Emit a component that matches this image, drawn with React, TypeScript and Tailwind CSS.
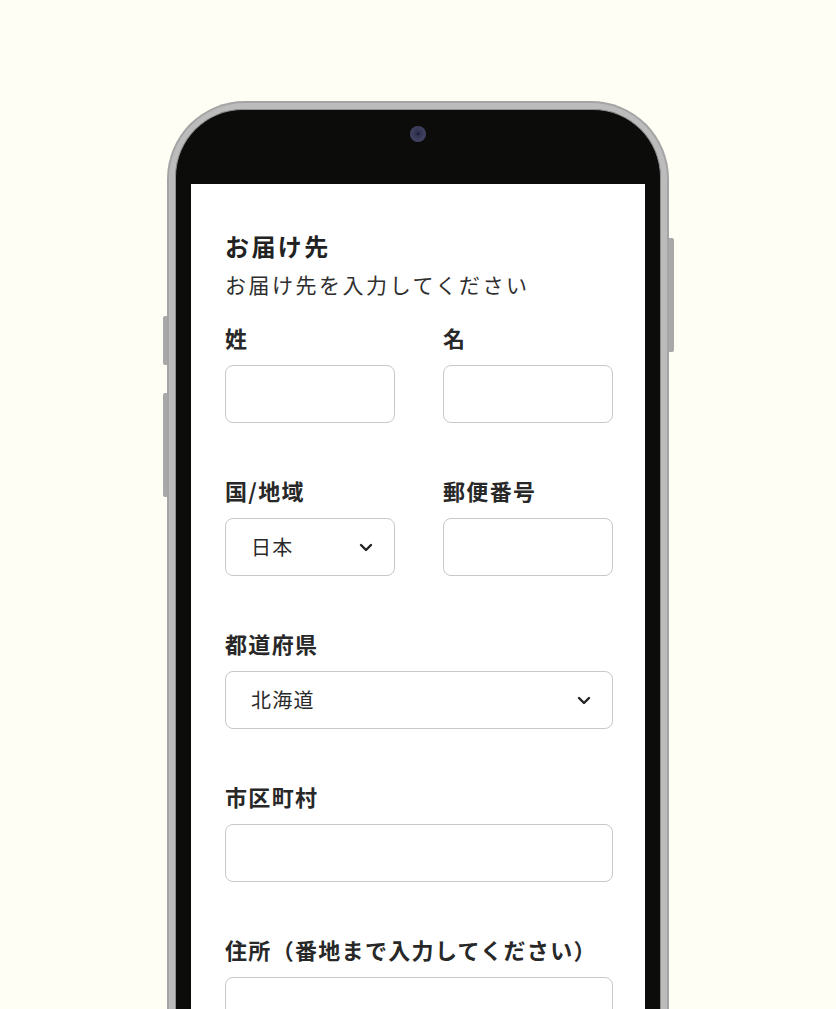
import React from "react";

const font = { fontFamily: '"Noto Sans CJK JP", "Noto Sans", sans-serif' };

function Chevron() {
  return (
    <svg width="14" height="9" viewBox="0 0 14 9" fill="none" className="shrink-0">
      <path d="M2 2l5 5 5-5" stroke="#222" strokeWidth="2.4" strokeLinecap="round" strokeLinejoin="round" />
    </svg>
  );
}

function Label({ children }: { children: React.ReactNode }) {
  return (
    <div className="h-[28px] mb-[14px] flex items-center text-[22px] font-bold text-[#282828] tracking-[0.06em] leading-none whitespace-nowrap">
      {children}
    </div>
  );
}

function Input() {
  return <div className="h-[58px] rounded-[8px] border border-[#c8c8c8] bg-white" />;
}

function Select({ value }: { value: string }) {
  return (
    <div className="h-[58px] rounded-[8px] border border-[#c8c8c8] bg-white flex items-center justify-between pl-[25px] pr-[21px]">
      <span className="text-[20px] text-[#2a2a2a] tracking-[0.06em] leading-none">{value}</span>
      <Chevron />
    </div>
  );
}

export default function App() {
  return (
    <div className="w-[836px] h-[1009px] overflow-hidden bg-[#fefef5]" style={font}>
      <div className="relative mx-auto mt-[101px] w-[502px]">
        {/* side buttons */}
        <div className="absolute left-[-4px] top-[215px] w-[5px] h-[49px] rounded-l-[2px] bg-[#a8a8a8]" />
        <div className="absolute left-[-4px] top-[292px] w-[5px] h-[104px] rounded-l-[2px] bg-[#a8a8a8]" />
        <div className="absolute right-[-5px] top-[137px] w-[6px] h-[114px] rounded-r-[2px] bg-[#a8a8a8]" />

        <div className="relative rounded-t-[78px] bg-[#bcbcbc] border-2 border-b-0 border-[#a4a4a4] pt-[6px] px-[6px]">
          <div className="relative rounded-t-[68px] bg-[#0c0c0b] border border-b-0 border-[#8e8e8e] px-[15px] pt-[74px] h-[960px]">
            {/* camera */}
            <div className="absolute left-1/2 top-[16px] -translate-x-1/2 w-[16px] h-[16px] rounded-full bg-[radial-gradient(circle_at_50%_45%,#2a2a46_0%,#3c3c5c_45%,#4a4a68_100%)] flex items-center justify-center">
              <div className="w-[2px] h-[2px] rounded-full bg-[#15152a]" />
            </div>
            {/* screen */}
            <div className="bg-white h-full pl-[34px] pr-[32px] pt-[46px]">
              <div className="h-[32px] flex items-center text-[24px] font-bold text-[#222] tracking-[0.1em] leading-none">
                お届け先
              </div>
              <div className="mt-[7px] h-[30px] flex items-center text-[21px] text-[#2e2e2e] tracking-[0.12em] leading-none whitespace-nowrap">
                お届け先を入力してください
              </div>

              <div className="mt-[24px] grid grid-cols-2 gap-x-[48px]">
                <div>
                  <Label>姓</Label>
                  <Input />
                </div>
                <div>
                  <Label>名</Label>
                  <Input />
                </div>
              </div>

              <div className="mt-[53px] grid grid-cols-2 gap-x-[48px]">
                <div>
                  <Label>国/地域</Label>
                  <Select value="日本" />
                </div>
                <div>
                  <Label>郵便番号</Label>
                  <Input />
                </div>
              </div>

              <div className="mt-[53px]">
                <Label>都道府県</Label>
                <Select value="北海道" />
              </div>

              <div className="mt-[53px]">
                <Label>市区町村</Label>
                <Input />
              </div>

              <div className="mt-[53px]">
                <Label>住所（番地まで入力してください）</Label>
                <Input />
              </div>
            </div>
          </div>
        </div>
      </div>
    </div>
  );
}
